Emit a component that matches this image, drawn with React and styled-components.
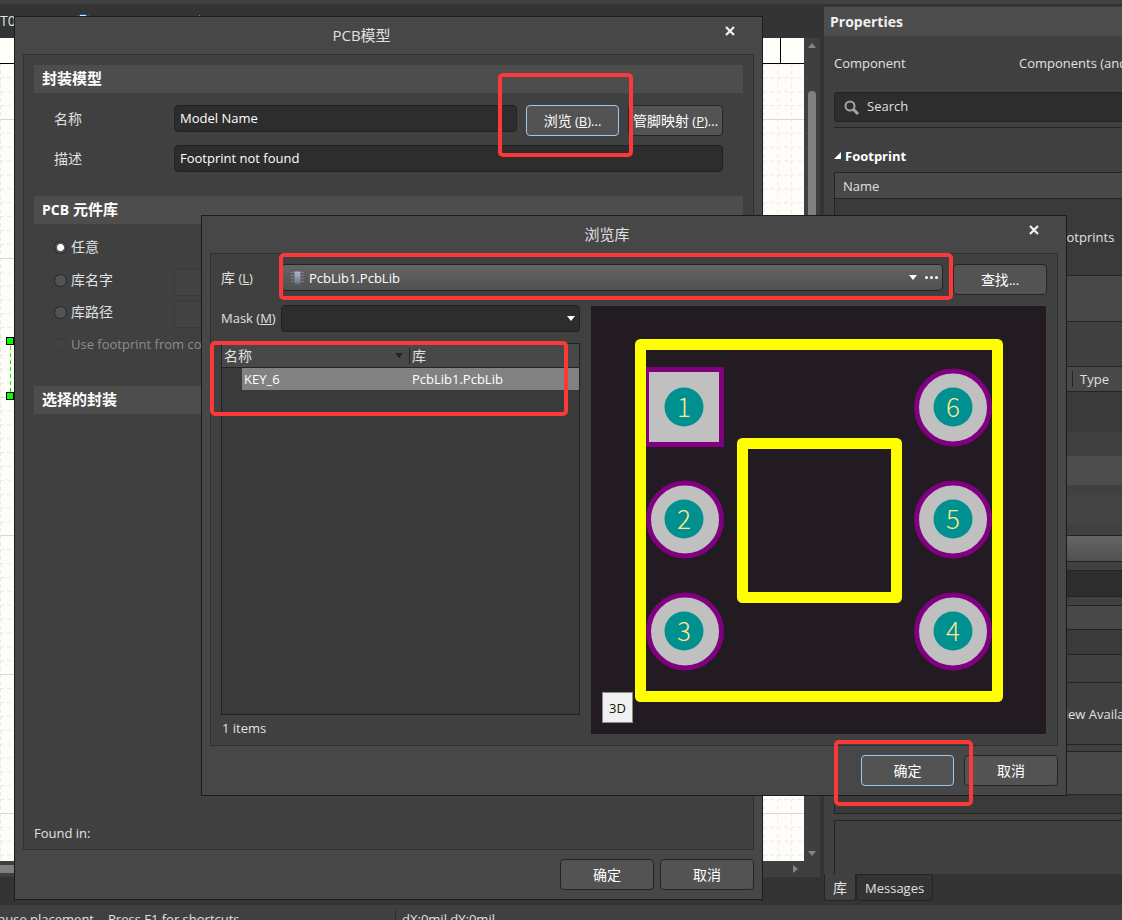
import React from 'react';
import styled, { createGlobalStyle, css } from 'styled-components';

const Global = createGlobalStyle`
  *, *::before, *::after { box-sizing: border-box; }
  body { margin: 0; background: #343434; }
  body, button, input, select, table {
    font-family: 'Open Sans', 'Noto Sans CJK SC', sans-serif;
    font-size: 13px;
    line-height: 20px;
    color: #e0e0e0;
  }
`;

const Cn = styled.span`
  font-size: 14px;
`;

/* ---------- application shell ---------- */

const Page = styled.div`
  position: relative;
  display: flex;
  flex-direction: column;
  height: 100vh;
  overflow: hidden;
  background: #343434;
`;

const TopStrip = styled.div`
  flex: 0 0 4px;
  background: #414141;
`;

const Workspace = styled.div`
  flex: 1;
  min-height: 0;
  display: flex;
  gap: 4px;
`;

const Editor = styled.main`
  flex: 1;
  min-width: 0;
  display: grid;
  grid-template: 34px 1fr 16px / 1fr 16px;
  padding-bottom: 28px;
`;

const DocTabs = styled.div`
  grid-column: 1 / -1;
  display: flex;
  align-items: center;
  overflow: hidden;
  font-size: 14px;
`;

const TabMarks = styled.svg`
  align-self: flex-start;
  margin: 10px 0 0 48px;
`;

const Canvas = styled.svg`
  display: block;
  width: 100%;
  height: 100%;
  background: #fffdf8;
`;

const VScroll = styled.div`
  display: flex;
  flex-direction: column;
  align-items: center;
  justify-content: space-between;
  padding: 5px 0;
  background: #3f3f3f;
`;

const VThumb = styled.div`
  flex: 1;
  width: 8px;
  margin: 43px 0 300px;
  border-radius: 4px;
  background: #808080;
`;

const HScroll = styled.div`
  grid-column: 1 / -1;
  display: flex;
  align-items: center;
  justify-content: space-between;
  padding-right: 22px;
  background: #3f3f3f;
`;

const HThumb = styled.div`
  width: 400px;
  height: 8px;
  background: #808080;
`;

const StatusBar = styled.footer`
  flex: 0 0 15px;
  display: flex;
  padding-top: 4px;
  overflow: hidden;
  background: #404040;
  white-space: nowrap;
`;

const StatusClip = styled.div`
  display: flex;
  justify-content: flex-end;
  width: 94px;
  overflow: hidden;
`;

const StatusHint = styled.div`
  width: 301px;
  padding-left: 14px;
`;

const StatusCoords = styled.div`
  padding-left: 6px;
  border-left: 1px solid #2c2c2c;
`;

/* ---------- properties panel ---------- */

const Panel = styled.aside`
  flex: 0 0 298px;
  display: flex;
  flex-direction: column;
  margin: 3px 0 4px;
  overflow: hidden;
  white-space: nowrap;
`;

const PanelTitle = styled.h2`
  flex: 0 0 29px;
  margin: 0;
  padding-left: 6px;
  font-size: 14px;
  line-height: 29px;
  font-weight: 700;
  color: #f0f0f0;
  background: #4d4d4d;
`;

const PanelBody = styled.div`
  flex: 1;
  display: flex;
  flex-direction: column;
  padding-left: 10px;
  background: #404040;
`;

const FilterRow = styled.div`
  display: grid;
  grid-template-columns: 185px auto;
  align-items: center;
  flex: 0 0 56px;
  padding-bottom: 2px;
`;

const SearchBox = styled.label`
  display: flex;
  align-items: center;
  gap: 7px;
  flex: 0 0 30px;
  padding-left: 8px;
  border: 1px solid #222;
  border-right: 0;
  border-radius: 4px 0 0 4px;
  background: #2d2d2d;
`;

const SearchInput = styled.input`
  flex: 1;
  min-width: 0;
  padding: 0 0 2px;
  border: 0;
  outline: 0;
  background: none;
  &::placeholder { color: #e0e0e0; opacity: 1; }
`;

const GroupTitle = styled.h3`
  display: flex;
  align-items: center;
  gap: 4px;
  flex: 0 0 45px;
  margin: 5px 0 0;
  padding-top: 11px;
  border-top: 1px solid #242424;
  font-size: 13px;
  font-weight: 700;
  color: #fff;
`;

const Block = styled.div`
  flex: 0 0 ${(p) => p.$h}px;
  display: flex;
  align-items: center;
  padding-left: ${(p) => p.$pad || 0}px;
  background: ${(p) => p.$bg || '#404040'};
  ${(p) => p.$line && css`border-top: 1px solid #242424;`}
  ${(p) => p.$side && css`border-left: 1px solid #242424;`}
`;

const TypeHead = styled.span`
  padding-left: 7px;
  border-left: 1px solid #242424;
  line-height: 16px;
`;

const NotesBox = styled.div`
  flex: 1;
  margin-top: 6px;
  border: solid #242424;
  border-width: 1px 0 0 1px;
`;

const PanelTabs = styled.nav`
  flex: 0 0 27px;
  display: flex;
  background: #343434;
`;

const PanelTab = styled.button`
  padding: 0 8px;
  border: 1px solid #242424;
  border-top-color: ${(p) => (p.$active ? '#404040' : '#242424')};
  border-radius: 0 0 4px 4px;
  background: ${(p) => (p.$active ? '#404040' : '#343434')};
`;

/* ---------- dialogs ---------- */

const Dialog = styled.section`
  position: absolute;
  display: flex;
  flex-direction: column;
  border: 1px solid #1c1c1c;
  background: #474747;
`;

const ModelDialog = styled(Dialog)`
  top: 16px;
  bottom: 20px;
  left: 14px;
  width: 749px;
`;

const BrowseDialog = styled(Dialog)`
  top: 215px;
  left: 201px;
  width: 866px;
`;

const TitleBar = styled.header`
  display: grid;
  grid-template-columns: 1fr 54px;
  flex: 0 0 37px;
`;

const DialogTitle = styled.h1`
  margin: 0;
  font-size: 15px;
  line-height: 37px;
  font-weight: 400;
  text-align: center;
`;

const Close = styled.button`
  display: flex;
  align-items: center;
  justify-content: center;
  height: 28px;
  margin-right: 10px;
  padding: 0;
  border: 0;
  background: none;
`;

const Frame = styled.div`
  flex: 1;
  display: flex;
  flex-direction: column;
  margin: 0 8px;
  padding: 10px 10px ${(p) => p.$bottom}px;
  border: 1px solid #303030;
  background: #404040;
`;

const Footer = styled.footer`
  display: flex;
  justify-content: flex-end;
  gap: ${(p) => p.$gap}px;
  padding: 9px 8px;
`;

const Button = styled.button`
  flex: 0 0 ${(p) => p.$w || 94}px;
  height: 31px;
  padding: 0;
  border: 1px solid ${(p) => (p.$focus ? '#99c9f5' : '#242424')};
  border-radius: 4px;
  background: #535353;
  color: #fff;
  white-space: nowrap;
`;

const SectionTitle = styled.h2`
  flex: 0 0 28px;
  height: 28px;
  margin: 0;
  padding-left: 8px;
  font-size: 15px;
  line-height: 27px;
  font-weight: 700;
  color: #fff;
  background: #4d4d4d;
`;

const Ascii = styled.span`
  font-size: 14px;
`;

const Form = styled.div`
  display: flex;
  flex-direction: column;
  gap: 9px;
  padding: 12px 20px 24px;
`;

const FieldRow = styled.div`
  display: flex;
  gap: 9px;
`;

const FieldLabel = styled.label`
  flex: 0 0 111px;
  font-size: 14px;
  line-height: 27px;
`;

const TextBox = styled.input`
  flex: 1;
  min-width: 0;
  height: 27px;
  padding: 0 5px 2px;
  border: 1px solid #222;
  border-radius: 4px;
  background: #2d2d2d;
  color: #fff;
  &:disabled { border-color: #383838; background: #434343; }
`;

const Radios = styled.fieldset`
  display: flex;
  flex-direction: column;
  gap: 5px;
  min-width: 0;
  margin: 0;
  padding: 12px 20px 26px;
  border: 0;
`;

const RadioRow = styled.div`
  display: flex;
  align-items: flex-start;
  height: 27px;
  margin-bottom: ${(p) => (p.$first ? 1 : 0)}px;
`;

const RadioLabel = styled.label`
  display: flex;
  align-items: center;
  gap: 4px;
  flex: 0 0 ${(p) => (p.$latin ? 147 : 120)}px;
  height: 22px;
  overflow: hidden;
  font-size: ${(p) => (p.$latin ? 13 : 14)}px;
  white-space: nowrap;
  color: ${(p) => (p.$off ? '#8d8d8d' : '#e0e0e0')};
`;

const Radio = styled.input`
  appearance: none;
  flex: none;
  width: 13px;
  height: 13px;
  margin: 0;
  border: 1px solid #262626;
  border-radius: 50%;
  background: #535353;
  &:checked { background: radial-gradient(circle, #fff 0 3px, #535353 4px); }
  &:disabled { border-color: #393939; background: #424242; }
`;

const FoundIn = styled.p`
  margin: auto 0 0;
`;

const LibRow = styled.div`
  display: flex;
  height: 31px;
  margin-bottom: 10px;
`;

const LibLabel = styled.label`
  flex: 0 0 60px;
  height: 27px;
  line-height: 27px;
  white-space: nowrap;
`;

const Combo = styled.div`
  display: flex;
  align-items: center;
  flex: 1;
  height: 27px;
  padding: 0 4px 0 8px;
  border: 1px solid #222;
  border-radius: 4px;
  background: ${(p) => (p.$raised ? 'linear-gradient(#656565, #505050)' : '#2d2d2d')};
  margin-right: ${(p) => (p.$raised ? 10 : 0)}px;
`;

const Select = styled.select`
  appearance: none;
  flex: 1;
  min-width: 0;
  padding: 0 4px;
  border: 0;
  background: none;
  color: #fff;
`;

const MoreButton = styled.button`
  display: flex;
  margin-left: 8px;
  padding: 0;
  border: 0;
  background: none;
`;

const BrowseBody = styled.div`
  display: grid;
  grid-template-columns: 359px 1fr;
  gap: 11px;
`;

const ListColumn = styled.div`
  display: flex;
  flex-direction: column;
`;

const MaskRow = styled.div`
  display: flex;
  margin-bottom: 11px;
`;

const ListBox = styled.div`
  flex: 1;
  border: 1px solid #222;
  background: #3a3a3a;
`;

const Table = styled.table`
  width: 100%;
  border-spacing: 0;
  table-layout: fixed;
`;

const Th = styled.th`
  height: 24px;
  padding: 0 2px;
  border-bottom: 1px solid #242424;
  background: #484848;
  font-size: 14px;
  font-weight: 400;
  text-align: left;
`;

const ThInner = styled.div`
  display: flex;
  align-items: center;
  justify-content: space-between;
  height: 16px;
  margin-right: -2px;
  padding-right: 6px;
  border-right: 1px solid #242424;
`;

const Td = styled.td`
  height: 22px;
  padding: 0 2px;
  color: #fff;
  background: ${(p) => (p.$indent ? 'none' : '#828282')};
`;

const Count = styled.p`
  margin: 3px 0 0 1px;
`;

const Preview = styled.div`
  display: grid;
  margin: 1px 1px 4px 0;
  background: #221c22;
`;

const FootprintSvg = styled.svg`
  grid-area: 1 / 1;
  display: block;
  width: 100%;
`;

const ViewButton = styled.button`
  grid-area: 1 / 1;
  align-self: end;
  width: 31px;
  height: 31px;
  margin: 0 0 11px 11px;
  padding: 0;
  border: 1px solid #8a8a8a;
  background: #f0f0f0;
  color: #111;
  z-index: 1;
`;

const Marker = styled.div`
  position: absolute;
  left: ${(p) => p.$x}px;
  top: ${(p) => p.$y}px;
  width: ${(p) => p.$w}px;
  height: ${(p) => p.$h}px;
  border: 4px solid #fc3838;
  border-radius: 5px;
  pointer-events: none;
`;

/* ---------- small drawings ---------- */

const arrows = {
  up: 'M0 5 4 0 8 5Z',
  down: 'M0 0H8L4 5Z',
  right: 'M0 0 5 4 0 8Z',
};

function Arrow({ dir = 'down', color = '#fff' }) {
  return (
    <svg width={dir === 'right' ? 5 : 8} height={dir === 'right' ? 8 : 5} aria-hidden="true">
      <path d={arrows[dir]} fill={color} />
    </svg>
  );
}

function CloseIcon() {
  return (
    <svg width="10" height="10" viewBox="0 0 10 10" aria-hidden="true">
      <path d="M1 1 9 9M9 1 1 9" stroke="#f2f2f2" strokeWidth="2.2" />
    </svg>
  );
}

function ChipIcon() {
  return (
    <svg width="15" height="15" viewBox="0 0 15 15" aria-hidden="true">
      <defs>
        <linearGradient id="chip" x1="0" y1="0" x2="0" y2="1">
          <stop offset="0" stopColor="#b4bac6" />
          <stop offset="1" stopColor="#697383" />
        </linearGradient>
      </defs>
      <path d="M1 2.5H14M1 5.5H14M1 8.5H14M1 11.5H14" stroke="#7e7e80" />
      <rect x="4" y="1" width="7" height="13" fill="url(#chip)" stroke="#596170" />
    </svg>
  );
}

const GRID = 13.88;
const majors = [81.5, 220.3, 359, 497.8, 636.6, 775.4];

function Sheet() {
  return (
    <Canvas aria-label="schematic sheet">
      <defs>
        <pattern id="grid" width={GRID} height={GRID} y={11.5} patternUnits="userSpaceOnUse">
          <path d={`M0 .5H${GRID}`} stroke="#ebe9e6" strokeDasharray="4 3" />
          <path d={`M.5 0V${GRID}`} stroke="#ebe9e6" strokeDasharray="4 3" />
        </pattern>
      </defs>
      <rect y="26" width="100%" height="100%" fill="url(#grid)" />
      {majors.map((y) => (
        <path key={y} d={`M0 ${Math.floor(y) + 0.5}H3000`} stroke="#d9d8d5" />
      ))}
      <path d="M0 25.5H3000M780.5 0V25" stroke="#000" />
      <path d="M10.5 308V354" stroke="#00ff00" strokeDasharray="4 3" />
      <g fill="#00ff00" stroke="#000">
        <rect x="6.5" y="299.5" width="7" height="7" />
        <rect x="6.5" y="354.5" width="7" height="7" />
      </g>
    </Canvas>
  );
}

const pads = [
  { n: 1, x: 684, y: 407, square: true },
  { n: 2, x: 685, y: 519 },
  { n: 3, x: 685, y: 631 },
  { n: 4, x: 953, y: 631 },
  { n: 5, x: 953, y: 519 },
  { n: 6, x: 953, y: 407 },
];

function Footprint() {
  return (
    <FootprintSvg viewBox="591 306 455 428" role="img" aria-label="KEY_6">
      {pads.map(({ n, x, y, square }) => (
        <g key={n}>
          {square ? (
            <rect x="646.5" y="369.5" width="75" height="75" fill="#c0c0c0" stroke="#800080" strokeWidth="5" />
          ) : (
            <circle cx={x} cy={y + 0.5} r="36.5" fill="#c0c0c0" stroke="#800080" strokeWidth="5" />
          )}
          <circle cx={x < 700 ? 684 : x} cy={y} r="19.5" fill="#009090" />
          <text
            x={x < 700 ? 684 : x}
            y={y + 10}
            textAnchor="middle"
            fontFamily="'Noto Sans CJK SC', sans-serif"
            fontWeight="300"
            fontSize="26"
            fill="#ffe88c"
          >
            {n}
          </text>
        </g>
      ))}
      <g fill="none" stroke="#ffff00" strokeWidth="11" strokeLinejoin="round">
        <rect x="640.5" y="344.5" width="357" height="352" />
        <rect x="742.5" y="443.5" width="154" height="154" />
      </g>
    </FootprintSvg>
  );
}

/* ---------- screens ---------- */

function PropertiesPanel() {
  return (
    <Panel>
      <PanelTitle>Properties</PanelTitle>
      <PanelBody>
        <FilterRow>
          <span>Component</span>
          <span>Components (and more)</span>
        </FilterRow>
        <SearchBox>
          <svg width="17" height="17" viewBox="0 0 17 17" aria-hidden="true">
            <circle cx="7" cy="7" r="4.5" fill="none" stroke="#a3a3a3" strokeWidth="2" />
            <path d="M10 10 15 15" stroke="#a3a3a3" strokeWidth="3" />
          </svg>
          <SearchInput placeholder="Search" aria-label="Search" />
        </SearchBox>
        <GroupTitle>
          <svg width="7" height="7" aria-hidden="true">
            <path d="M7 0V7H0Z" fill="#fff" />
          </svg>
          Footprint
        </GroupTitle>
        <Block $h={26} $line $side $bg="#484848" $pad={8}>Name</Block>
        <Block $h={77} $line $side $bg="#3a3a3a" $pad={217}>Footprints</Block>
        <Block $h={46} $line $bg="#484848" />
        <Block $h={45} $line />
        <Block $h={25} $line $bg="#484848" $pad={238}>
          <TypeHead>Type</TypeHead>
        </Block>
        <Block $h={41} $line $bg="#3a3a3a" />
        <Block $h={24} />
        <Block $h={29} $bg="#4d4d4d" />
        <Block $h={10} />
        <Block $h={30} $bg="#444" />
        <Block $h={10} />
        <Block $h={26} $line $bg="linear-gradient(#656565, #505050)" />
        <Block $h={9} $line />
        <Block $h={26} $line $bg="#2d2d2d" />
        <Block $h={9} $line />
        <Block $h={24} $line $bg="#484848" />
        <Block $h={25} $line $bg="#3a3a3a" />
        <Block $h={28} $line />
        <Block $h={62} $line $pad={223}>View Available</Block>
        <Block $h={7} $line />
        <Block $h={43} $line $bg="#484848" />
        <Block $h={19} $line $side $bg="#3a3a3a" />
        <Block $h={1} $line />
        <NotesBox />
      </PanelBody>
      <PanelTabs>
        <PanelTab $active><Cn>库</Cn></PanelTab>
        <PanelTab>Messages</PanelTab>
      </PanelTabs>
    </Panel>
  );
}

function PcbModelDialog() {
  return (
    <ModelDialog role="dialog" aria-label="PCB模型">
      <TitleBar>
        <DialogTitle>PCB模型</DialogTitle>
        <Close aria-label="Close"><CloseIcon /></Close>
      </TitleBar>
      <Frame $bottom={6}>
        <SectionTitle>封装模型</SectionTitle>
        <Form>
          <FieldRow>
            <FieldLabel htmlFor="name">名称</FieldLabel>
            <TextBox id="name" defaultValue="Model Name" />
            <Button $w={93} $focus><Cn>浏览</Cn> (<u>B</u>)...</Button>
            <Button $w={95}><Cn>管脚映射</Cn> (<u>P</u>)...</Button>
          </FieldRow>
          <FieldRow>
            <FieldLabel htmlFor="desc">描述</FieldLabel>
            <TextBox id="desc" defaultValue="Footprint not found" />
          </FieldRow>
        </Form>
        <SectionTitle><Ascii>PCB</Ascii> 元件库</SectionTitle>
        <Radios>
          <RadioRow $first>
            <RadioLabel><Radio type="radio" name="lib" defaultChecked />任意</RadioLabel>
          </RadioRow>
          <RadioRow>
            <RadioLabel><Radio type="radio" name="lib" />库名字</RadioLabel>
            <TextBox disabled aria-label="库名字" />
          </RadioRow>
          <RadioRow>
            <RadioLabel><Radio type="radio" name="lib" />库路径</RadioLabel>
            <TextBox disabled aria-label="库路径" />
          </RadioRow>
          <RadioRow>
            <RadioLabel $off $latin><Radio type="radio" name="lib" disabled />Use footprint from component</RadioLabel>
          </RadioRow>
        </Radios>
        <SectionTitle>选择的封装</SectionTitle>
        <FoundIn>Found in:</FoundIn>
      </Frame>
      <Footer $gap={6}>
        <Button><Cn>确定</Cn></Button>
        <Button><Cn>取消</Cn></Button>
      </Footer>
      <Marker $x={483} $y={56} $w={135} $h={84} />
    </ModelDialog>
  );
}

function BrowseLibraryDialog() {
  return (
    <BrowseDialog role="dialog" aria-label="浏览库">
      <TitleBar>
        <DialogTitle>浏览库</DialogTitle>
        <Close aria-label="Close"><CloseIcon /></Close>
      </TitleBar>
      <Frame $bottom={7}>
        <LibRow>
          <LibLabel htmlFor="library"><Cn>库</Cn> (<u>L</u>)</LibLabel>
          <Combo $raised>
            <ChipIcon />
            <Select id="library">
              <option>PcbLib1.PcbLib</option>
            </Select>
            <Arrow />
            <MoreButton aria-label="More">
              <svg width="13" height="3" aria-hidden="true">
                <g fill="#fff">
                  <circle cx="1.5" cy="1.5" r="1.5" />
                  <circle cx="6.5" cy="1.5" r="1.5" />
                  <circle cx="11.5" cy="1.5" r="1.5" />
                </g>
              </svg>
            </MoreButton>
          </Combo>
          <Button><Cn>查找</Cn>...</Button>
        </LibRow>
        <BrowseBody>
          <ListColumn>
            <MaskRow>
              <LibLabel htmlFor="mask">Mask (<u>M</u>)</LibLabel>
              <Combo>
                <Select id="mask"><option value="" /></Select>
                <Arrow />
              </Combo>
            </MaskRow>
            <ListBox>
              <Table>
                <colgroup>
                  <col width="20" />
                  <col width="168" />
                  <col />
                </colgroup>
                <thead>
                  <tr>
                    <Th colSpan={2}><ThInner>名称<Arrow color="#222" /></ThInner></Th>
                    <Th>库</Th>
                  </tr>
                </thead>
                <tbody>
                  <tr>
                    <Td $indent />
                    <Td>KEY_6</Td>
                    <Td>PcbLib1.PcbLib</Td>
                  </tr>
                </tbody>
              </Table>
            </ListBox>
            <Count>1 items</Count>
          </ListColumn>
          <Preview>
            <Footprint />
            <ViewButton>3D</ViewButton>
          </Preview>
        </BrowseBody>
      </Frame>
      <Footer $gap={10}>
        <Button $w={93} $focus><Cn>确定</Cn></Button>
        <Button><Cn>取消</Cn></Button>
      </Footer>
      <Marker $x={77} $y={37} $w={674} $h={47} />
      <Marker $x={8} $y={125} $w={358} $h={75} />
      <Marker $x={632} $y={524} $w={139} $h={66} />
    </BrowseDialog>
  );
}

export default function App() {
  return (
    <Page>
      <Global />
      <TopStrip />
      <Workspace>
        <Editor>
          <DocTabs>
            T0
            <TabMarks width="160" height="3" aria-hidden="true">
              <rect x="13" y="1" width="12" height="2" fill="#2456b0" />
              <rect x="16" width="6" height="1" fill="#2456b0" />
              <rect x="16" y="1" width="6" height="1" fill="#dbe8fa" />
              <rect x="135" y="1" width="1" height="1" fill="#5f7f9f" />
            </TabMarks>
          </DocTabs>
          <Sheet />
          <VScroll>
            <Arrow dir="up" color="#858585" />
            <VThumb />
            <Arrow color="#858585" />
          </VScroll>
          <HScroll>
            <HThumb />
            <Arrow dir="right" color="#858585" />
          </HScroll>
        </Editor>
        <PropertiesPanel />
      </Workspace>
      <StatusBar>
        <StatusClip>pause placement</StatusClip>
        <StatusHint>Press F1 for shortcuts</StatusHint>
        <StatusCoords>dX:0mil dY:0mil</StatusCoords>
      </StatusBar>
      <PcbModelDialog />
      <BrowseLibraryDialog />
    </Page>
  );
}
